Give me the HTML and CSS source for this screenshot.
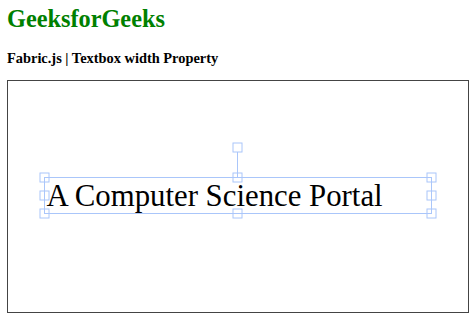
FILE: index.html
```html
<!DOCTYPE html>
<html>
<head>
<meta charset="utf-8">
<link rel="stylesheet" href="styles.css">
</head>
<body>
<div class="page">
  <h1 class="title">GeeksforGeeks</h1>
  <h3 class="subtitle">Fabric.js | Textbox width Property</h3>
  <div class="canvas">
    <svg class="stage" width="460" height="231" viewBox="0 0 460 231" xmlns="http://www.w3.org/2000/svg">
      <text x="38.5" y="124.5" class="obj-text">A Computer Science Portal</text>
      <g class="controls" fill="none" stroke="rgb(170,198,250)" stroke-width="1">
        <rect x="36.5" y="96.5" width="387" height="36"/>
        <line x1="229.5" y1="71" x2="229.5" y2="96.5"/>
        <rect x="32" y="92" width="9" height="9"/>
        <rect x="32" y="110" width="9" height="9"/>
        <rect x="32" y="128" width="9" height="9"/>
        <rect x="419" y="92" width="9" height="9"/>
        <rect x="419" y="110" width="9" height="9"/>
        <rect x="419" y="128" width="9" height="9"/>
        <rect x="225" y="92" width="9" height="9"/>
        <rect x="225" y="128" width="9" height="9"/>
        <rect x="225" y="62" width="9" height="9"/>
      </g>
    </svg>
  </div>
</div>
</body>
</html>
```

FILE: styles.css
```css
html, body {
  margin: 0;
  padding: 0;
  background: #fff;
}
.page {
  padding: 5px 0 0 7px;
  font-family: "Liberation Serif", "Times New Roman", serif;
}
.title {
  margin: 0;
  font-size: 24.3px;
  line-height: 28px;
  font-weight: bold;
  color: #008000;
}
.subtitle {
  margin: 17px 0 0 0;
  font-size: 14.4px;
  line-height: 16px;
  font-weight: bold;
  color: #000;
}
.canvas {
  margin-top: 14px;
  width: 462px;
  height: 233px;
  box-sizing: border-box;
  border: 1px solid #444;
  background: #fff;
}
.stage {
  display: block;
}
.obj-text {
  font-family: "Liberation Serif", "Times New Roman", serif;
  font-size: 30.8px;
  fill: #000;
}
```
